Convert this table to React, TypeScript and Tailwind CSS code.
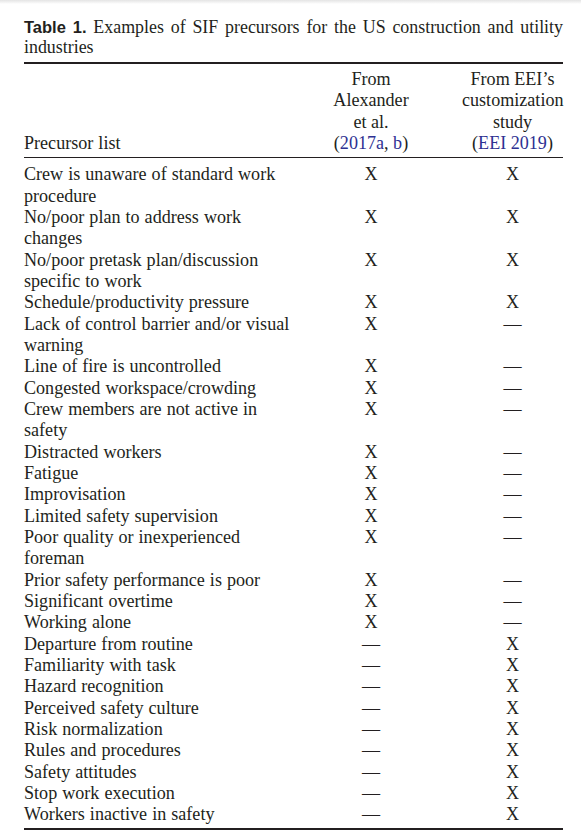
import React from 'react';

type Row = { lines: string[]; a: boolean; b: boolean };

const rows: Row[] = [
  { lines: ['Crew is unaware of standard work', 'procedure'], a: true, b: true },
  { lines: ['No/poor plan to address work', 'changes'], a: true, b: true },
  { lines: ['No/poor pretask plan/discussion', 'specific to work'], a: true, b: true },
  { lines: ['Schedule/productivity pressure'], a: true, b: true },
  { lines: ['Lack of control barrier and/or visual', 'warning'], a: true, b: false },
  { lines: ['Line of fire is uncontrolled'], a: true, b: false },
  { lines: ['Congested workspace/crowding'], a: true, b: false },
  { lines: ['Crew members are not active in', 'safety'], a: true, b: false },
  { lines: ['Distracted workers'], a: true, b: false },
  { lines: ['Fatigue'], a: true, b: false },
  { lines: ['Improvisation'], a: true, b: false },
  { lines: ['Limited safety supervision'], a: true, b: false },
  { lines: ['Poor quality or inexperienced', 'foreman'], a: true, b: false },
  { lines: ['Prior safety performance is poor'], a: true, b: false },
  { lines: ['Significant overtime'], a: true, b: false },
  { lines: ['Working alone'], a: true, b: false },
  { lines: ['Departure from routine'], a: false, b: true },
  { lines: ['Familiarity with task'], a: false, b: true },
  { lines: ['Hazard recognition'], a: false, b: true },
  { lines: ['Perceived safety culture'], a: false, b: true },
  { lines: ['Risk normalization'], a: false, b: true },
  { lines: ['Rules and procedures'], a: false, b: true },
  { lines: ['Safety attitudes'], a: false, b: true },
  { lines: ['Stop work execution'], a: false, b: true },
  { lines: ['Workers inactive in safety'], a: false, b: true },
];

const Mark: React.FC<{ on: boolean }> = ({ on }) => (
  <div className="text-center">{on ? 'X' : '—'}</div>
);

export default function App() {
  return (
    <div className="min-h-[840px] w-[581px] bg-white text-[#231f20] font-['Liberation_Serif','Times_New_Roman',serif]">
      <div className="h-[4px] bg-gradient-to-b from-[#e4e4e4] to-white" />
      <div className="pl-[24px] pr-[18px] pt-[13px]">
        <p className="text-[17.9px] leading-[20px] text-justify">
          <span className="font-bold text-[16.5px] font-['Liberation_Sans',Arial,sans-serif]">Table 1.</span>{' '}
          Examples of SIF precursors for the US construction and utility industries
        </p>

        <div className="mt-[5px] border-t-2 border-b border-[#231f20] pt-[5px] pb-[3px] text-[18.1px] leading-[21.33px]">
          <div className="grid grid-cols-[minmax(0,1fr)_100px_101px] gap-x-[41px] items-end">
            <div className="[word-spacing:0.5px]">Precursor list</div>
            <div className="text-center whitespace-nowrap">
              From
              <br />
              Alexander
              <br />
              et al.
              <br />
              (<span className="text-[#2e3192]">2017a</span>, <span className="text-[#2e3192]">b</span>)
            </div>
            <div className="text-center whitespace-nowrap">
              From EEI’s
              <br />
              customization
              <br />
              study
              <br />
              (<span className="text-[#2e3192]">EEI 2019</span>)
            </div>
          </div>
        </div>

        <div className="border-b-2 border-[#231f20] pt-[6px] pb-[3px] text-[18.1px] leading-[21.33px]">
          {rows.map((r, i) => (
            <div key={i} className="grid grid-cols-[minmax(0,1fr)_100px_101px] gap-x-[41px] items-start">
              <div className="whitespace-nowrap [word-spacing:0.5px]">
                {r.lines.map((l, j) => (
                  <div key={j}>{l}</div>
                ))}
              </div>
              <Mark on={r.a} />
              <Mark on={r.b} />
            </div>
          ))}
        </div>
      </div>
    </div>
  );
}
